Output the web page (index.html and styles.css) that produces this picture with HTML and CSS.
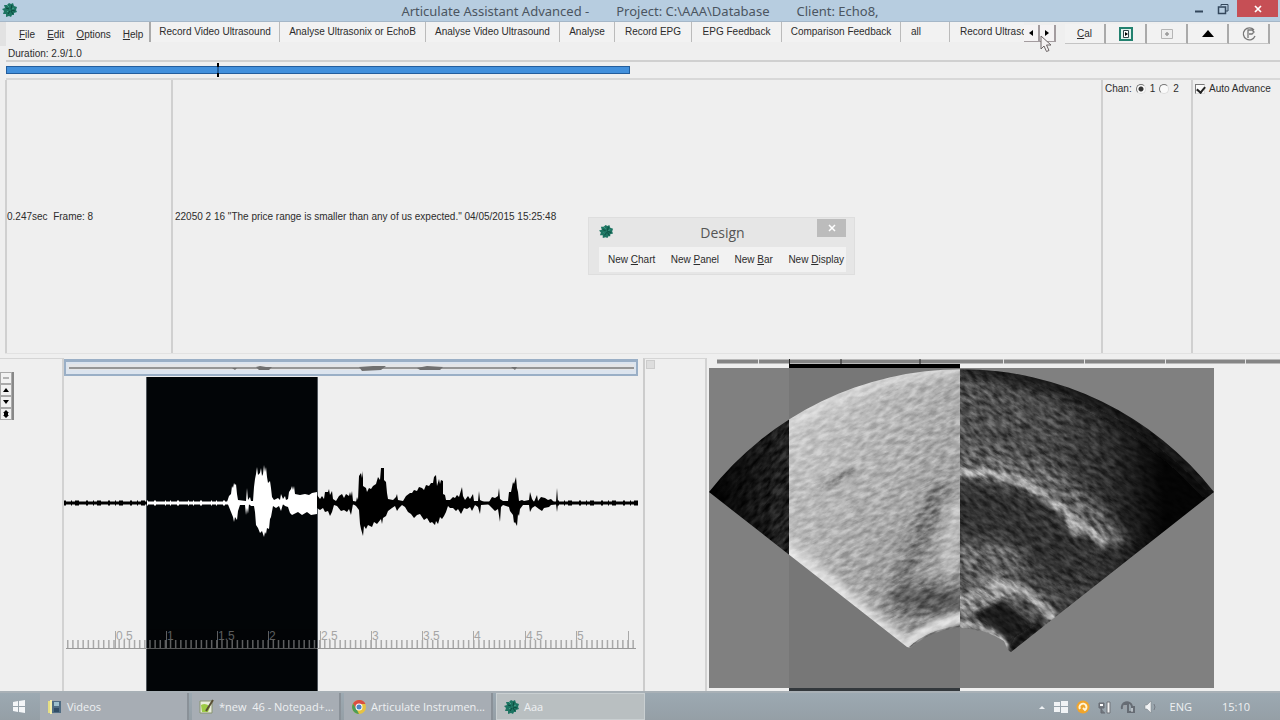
FILE: index.html
```html
<!DOCTYPE html>
<html lang="en">
<head>
<meta charset="utf-8">
<title>Articulate Assistant Advanced</title>
<link rel="stylesheet" href="styles.css">
</head>
<body>
<svg class="defs" aria-hidden="true">
  <symbol id="clover" viewBox="0 0 16 16">
    <path d="M7 1l2 1 2-1 1 3 3 1-1 3 1 2-3 1 0 2-2 0-1 2-2-1-3 1 0-3-3 0 1-3-2-2 3-1-1-3 3 0z" fill="#1d7462"/>
    <path d="M4 6l3 1M10 3L9 7M6 12l2-3M13 9L9 8M11 12L9 9" stroke="#0b4a3d" stroke-width="1" fill="none"/>
    <path d="M5 3l2 2M12 6l-2 1M5 9l1 1" stroke="#45a48c" stroke-width="1" fill="none"/>
  </symbol>
</svg>
<div class="app">
  <header class="titlebar">
    <svg class="app-icon"><use href="#clover"/></svg>
    <h1 class="title"><span>Articulate Assistant Advanced -</span><span>Project: C:\AAA\Database</span><span>Client: Echo8,</span></h1>
    <div class="window-buttons">
      <button class="win" aria-label="Minimize"><svg width="10" height="12"><path d="M1 8.500h8" stroke="#33475c" stroke-width="2"/></svg></button>
      <button class="win" aria-label="Restore"><svg width="12" height="12"><path d="M4 3V1.500h7V8H9" fill="none" stroke="#33475c"/><path d="M1.500 4h7v6.500h-7z" fill="none" stroke="#33475c" stroke-width="1.500"/></svg></button>
      <button class="win close" aria-label="Close"><svg width="8" height="8"><path d="M1 1l6 6M7 1L1 7" stroke="#fff" stroke-width="1.700"/></svg></button>
    </div>
  </header>

  <div class="toolbar">
    <nav class="menu">
      <button><u>F</u>ile</button><button><u>E</u>dit</button><button><u>O</u>ptions</button><button><u>H</u>elp</button>
    </nav>
    <div class="tabs" role="tablist">
      <button role="tab">Record Video Ultrasound</button>
      <button role="tab">Analyse Ultrasonix or EchoB</button>
      <button role="tab">Analyse Video Ultrasound</button>
      <button role="tab">Analyse</button>
      <button role="tab">Record EPG</button>
      <button role="tab">EPG Feedback</button>
      <button role="tab">Comparison Feedback</button>
      <button role="tab">all</button>
      <button role="tab">Record Ultrasound</button>
    </div>
    <div class="scroller">
      <button aria-label="Scroll tabs left"><svg width="6" height="8"><path d="M5 1v6L1 4z"/></svg></button>
      <button aria-label="Scroll tabs right"><svg width="6" height="8"><path d="M1 1v6l4-3z"/></svg></button>
      <svg class="pointer" width="12" height="18" viewBox="0 0 12 18"><path d="M1 1v13l3-3 2.500 5.500 2.500-1L6.500 10H11z" fill="#f5f2f3" stroke="#6c6466"/></svg>
    </div>
    <div class="tools">
      <button><u>C</u>al</button>
      <button aria-label="Play"><svg width="14" height="14"><path d="M1 1h12v12H1z" fill="#e4f3ef" stroke="#23816f" stroke-width="2"/><path d="M4.500 3.500h5v7h-5z" fill="#fff" stroke="#30444a"/><path d="M6 5v4l3-2z"/></svg></button>
      <button aria-label="Stop"><svg width="14" height="12"><path d="M1.500 1.500h11v9h-11z" fill="#eee" stroke="#b5b5b5"/><path d="M5 6h4M7 4v4" stroke="#999" stroke-width="1.500"/></svg></button>
      <button aria-label="Up"><svg width="14" height="8"><path d="M7 0l6 7H1z"/></svg></button>
      <button aria-label="Help"><svg width="16" height="16"><path d="M13 4a6 6 0 1 0 1 6M7 12V4h4l2 2-2 2H8" fill="none" stroke="#777" stroke-width="1.300"/></svg></button>
    </div>
  </div>

  <label class="duration" for="position">Duration: 2.9/1.0</label>
  <div class="track"><input id="position" type="range" min="0" max="625" value="212"></div>

  <section class="info">
    <div class="cell">0.247sec&nbsp; Frame: 8</div>
    <div class="cell">22050 2 16 "The price range is smaller than any of us expected." 04/05/2015 15:25:48</div>
    <div class="cell options"><span>Chan:</span>
      <label><input type="radio" name="chan" checked>1</label>
      <label><input type="radio" name="chan">2</label>
    </div>
    <div class="cell options"><label><input type="checkbox" checked>Auto Advance</label></div>
  </section>

  <main class="workspace">
    <div class="gutter">
      <div class="zoom">
        <button aria-label="Zoom out"><svg width="8" height="8"><path d="M1 4h6" stroke="#777"/></svg></button>
        <button aria-label="Up"><svg width="8" height="8"><path d="M4 2l3 4H1z"/></svg></button>
        <button aria-label="Down"><svg width="8" height="8"><path d="M4 6l3-4H1z"/></svg></button>
        <button aria-label="Fit"><svg width="8" height="8"><path d="M4 0l3 3H6v2h1L4 8 1 5h1V3H1z"/></svg></button>
      </div>
    </div>
    <div class="wave">
      <svg viewBox="64 358 574 333" role="img" aria-label="Waveform">
        <rect x="64" y="359" width="574" height="17" fill="#9aafc6"/>
        <rect x="66" y="362" width="570" height="12" fill="#dce4ee"/>
        <rect x="68" y="364" width="566" height="6" fill="#e4e5e7"/>
        <path d="M69 368h565" stroke="#969696" stroke-width="2"/>
        <path d="M232 368h5l-2 2zM256 367l4-1 6 1 6 0-3 3-10 0zM359 367l14-1 13 0-5 4-19 1zM417 368l10-2 16 1-3 3-20 0zM511 367h6l-2 3z" fill="#707070"/>
        <rect x="147" y="377" width="170" height="314" fill="#020507"/>
        <path d="M146.500 377v314M317.500 377v314" stroke="#50565c"/>
        <path d="M64 503h83M317 503h321" stroke="#000" stroke-width="3"/>
        <path d="M64 503h83M557 503h81" stroke="#000" stroke-width="5" stroke-dasharray="2 5 1 3 4 7"/>
        <path d="M147 503h170" stroke="#fff" stroke-width="3"/>
        <path d="M147 503h82" stroke="#fff" stroke-width="5" stroke-dasharray="1 6 2 9 1 4"/>
        <path fill="#fff" d="M227 502L229 496 231 494 232 486 233 488 234 483 235 485 236 484 237 494 238 500 246 501 247 488 248 500 250 497 251 501 253 501 254 487 255 479 256 474 257 467 258 475 260 473 261 468 262 476 263 474 264 465 265 472 266 467 267 477 268 483 270 481 271 488 272 497 274 500 278 498 280 500 281 494 283 499 285 496 286 500 288 499 289 492 291 489 292 486 293 490 294 486 295 494 300 495 305 494 309 495 312 493 317 492V514L311 515 307 512 302 515 298 512 294 514 292 515 290 513 288 507 285 506 283 504 281 511 279 506 276 508 273 506 271 517 270 519 269 529 267 528 266 534 265 532 264 537 262 531 260 533 258 528 256 525 255 512 254 506 251 506 249 504 248 514 247 508 246 515 245 505 240 505 238 511 237 520 235 517 234 522 233 517 231 512 229 507z"/>
        <path fill="#000" d="M317 495L320 499 322 496 324 499 325 492 328 492 329 489 330 495 332 491 333 499 336 501 339 496 342 494 344 498 346 494 349 496 350 492 351 496 352 491 353 501 356 502 357 497 358 500 359 476 361 473 362 478 363 471 363 486 366 488 367 492 369 488 371 489 373 486 376 484 378 477 380 480 381 468 384 468 384 480 386 482 387 493 388 499 393 500 396 497 397 494 398 500 403 501 406 496 410 493 412 493 414 490 417 491 419 487 422 488 424 490 426 485 429 486 431 483 433 483 434 477 436 475 437 486 439 479 440 484 441 480 443 481 443 494 445 495 446 500 450 500 453 497 455 498 457 495 459 497 462 487 463 496 465 500 468 496 470 499 473 494 474 501 478 501 479 491 480 500 484 502 489 502 492 497 495 498 498 496 499 488 500 499 503 501 508 501 509 492 511 492 513 482 514 484 516 477 517 488 518 492 519 501 522 500 524 501 529 500 530 492 532 499 534 502 537 495 538 501 541 497 545 498 548 500 551 499 554 502 556 502 557 488 558 502V504L557 512 556 504 551 505 549 507 544 508 542 511 539 509 535 506 532 508 530 512 529 505 523 505 520 509 519 516 518 514 517 526 515 522 514 523 513 515 510 511 509 507 503 505 501 507 500 522 498 509 495 511 492 508 488 504 481 505 480 514 478 507 475 505 472 511 470 507 467 509 464 508 461 514 458 509 456 511 453 508 450 508 448 506 446 512 444 516 442 519 440 517 438 524 436 521 435 525 432 522 430 523 427 518 424 520 420 514 417 515 414 518 411 514 408 512 405 507 402 505 399 508 397 511 395 506 392 508 388 511 386 516 383 518 382 524 381 519 377 524 374 522 372 527 368 525 366 529 364 526 363 536 361 529 360 524 359 510 356 506 353 504 351 515 349 509 347 512 344 510 341 511 337 506 334 505 332 512 330 516 328 511 325 512 323 508 320 510 317 508z"/>
        <g stroke="#a9a9a9" fill="none">
          <path d="M66 648.500h570" stroke="#999"/>
          <path d="M67 644h569" stroke-width="8" stroke-dasharray="1.500 3.640"/>
          <path d="M115.500 631v17M166.500 631v17M217.500 631v17M268.500 631v17M320.500 631v17M371.500 631v17M422.500 631v17M473.500 631v17M525.500 631v17M576.500 631v17M628.500 631v17"/>
        </g>
        <g class="scale">
          <text x="116" y="640">0.5</text><text x="167" y="640">1</text><text x="218" y="640">1.5</text><text x="269" y="640">2</text><text x="321" y="640">2.5</text><text x="372" y="640">3</text><text x="423" y="640">3.5</text><text x="474" y="640">4</text><text x="526" y="640">4.5</text><text x="577" y="640">5</text>
        </g>
        <rect x="147" y="629" width="170" height="21" fill="#020507" fill-opacity=".45"/>
      </svg>
    </div>
    <div class="gutter second"><span class="grip"></span></div>
    <div class="scan">
      <svg viewBox="707 358 573 333" role="img" aria-label="Ultrasound frame">
        <defs>
          <clipPath id="fan"><path d="M709 492A321 321 0 0 1 1214 492L1011 652Q1007 651 1004 641Q985 629 960 628Q930 630 911 648L907 647z"/></clipPath>
          <clipPath id="dark-left"><rect x="709" y="368" width="80" height="320"/></clipPath>
          <clipPath id="selected"><rect x="789" y="368" width="171" height="320"/></clipPath>
          <clipPath id="right"><rect x="960" y="368" width="254" height="320"/></clipPath>
          <linearGradient id="lg" x1="0" y1="0" x2=".7" y2="1"><stop offset="0" stop-color="#d4d4d4"/><stop offset=".35" stop-color="#b8b8b8"/><stop offset="1" stop-color="#8c8c8c"/></linearGradient>
          <linearGradient id="rg" x1="0" y1="0" x2="1" y2="0"><stop offset="0" stop-color="#525252"/><stop offset=".35" stop-color="#484848"/><stop offset=".6" stop-color="#2a2a2a"/><stop offset=".8" stop-color="#040404"/></linearGradient>
          <linearGradient id="dg" x1="0" y1="0" x2="1" y2="0"><stop offset="0" stop-color="#000"/><stop offset=".3" stop-color="#0b0b0b"/><stop offset="1" stop-color="#222"/></linearGradient>
          <filter id="soft" filterUnits="userSpaceOnUse" x="700" y="340" width="560" height="360"><feGaussianBlur stdDeviation="6"/></filter>
          <filter id="edge" filterUnits="userSpaceOnUse" x="700" y="340" width="560" height="360"><feGaussianBlur stdDeviation="2.500"/></filter>
          <filter id="speckle" x="0" y="0" width="1" height="1" color-interpolation-filters="sRGB"><feTurbulence type="fractalNoise" baseFrequency=".1 .24" numOctaves="3" seed="7"/><feColorMatrix values="2 0 0 0 -.5  2 0 0 0 -.5  2 0 0 0 -.5  0 0 0 0 1"/></filter>
        </defs>
        <path d="M717 361.500h563" stroke="#858585" stroke-width="4"/>
        <path d="M758.500 359v5M1003.500 359v5M1084.500 359v5M1165.500 359v5M1245.500 359v5" stroke="#e5e5e5"/>
        <path d="M789.500 359v5M841 359v5M920 359v5" stroke="#222"/>
        <rect x="789" y="364" width="171" height="4" fill="#000"/>
        <rect x="709" y="368" width="505" height="320" fill="#808080"/>
        <rect x="789" y="368" width="171" height="320" fill="#777"/>
        <rect x="789" y="688" width="171" height="3" fill="#33383c"/>
        <g clip-path="url(#fan)">
          <g clip-path="url(#dark-left)"><rect x="709" y="368" width="80" height="320" fill="url(#dg)"/>
            <rect class="noise" x="560" y="250" width="400" height="480" transform="rotate(-50 749 500)" filter="url(#speckle)"/></g>
          <g clip-path="url(#selected)">
            <rect x="789" y="368" width="171" height="320" fill="url(#lg)"/>
            <path d="M780 545l130 108" stroke="#e4e4e4" stroke-width="18" filter="url(#soft)"/>
            <path d="M785 425Q860 374 965 366" stroke="#dcdcdc" stroke-width="12" fill="none" filter="url(#soft)"/>
            <path d="M942 485Q915 540 892 608" stroke="#6c6c6c" stroke-width="14" fill="none" filter="url(#soft)"/>
            <path d="M958 500l-12 75" stroke="#c0c0c0" stroke-width="18" filter="url(#soft)"/>
            <ellipse cx="930" cy="600" rx="36" ry="15" fill="#585858" filter="url(#soft)"/>
            <path d="M820 488l36-18" stroke="#666" stroke-width="4" filter="url(#edge)"/>
            <path d="M903 648Q926 624 965 617" stroke="#e0e0e0" stroke-width="10" fill="none" filter="url(#edge)"/>
            <path d="M910 648Q930 630 962 627" stroke="#777" stroke-width="3" fill="none"/>
            <rect class="noise light" x="660" y="220" width="440" height="560" transform="rotate(-25 870 500)" filter="url(#speckle)"/>
          </g>
          <g clip-path="url(#right)">
            <rect x="960" y="368" width="254" height="320" fill="url(#rg)"/>
            <path d="M960 366Q1110 375 1216 492" stroke="#161616" stroke-width="20" fill="none" filter="url(#soft)"/>
            <path d="M965 458Q1060 462 1120 545" stroke="#666" stroke-width="18" fill="none" filter="url(#soft)"/>
            <path d="M945 488Q1020 468 1085 535L1100 550 1070 590 1000 550 945 550z" fill="#333" filter="url(#soft)"/>
            <path d="M958 472Q1010 470 1045 496T1106 543" stroke="#a8a8a8" stroke-width="9" fill="none" filter="url(#edge)"/>
            <path d="M1067 520l12 14" stroke="#c0c0c0" stroke-width="8" filter="url(#edge)"/>
            <ellipse cx="985" cy="560" rx="40" ry="20" fill="#646464" filter="url(#soft)"/>
            <path d="M950 606L1010 592" stroke="#8c8c8c" stroke-width="24" filter="url(#soft)"/>
            <path d="M988 586Q1032 584 1053 620" stroke="#bcbcbc" stroke-width="8" fill="none" filter="url(#edge)"/>
            <path d="M972 613L1004 600 1032 625 1008 644z" fill="#1c1c1c" filter="url(#edge)"/>
            <path d="M958 624Q990 623 1008 648" stroke="#aaa" stroke-width="6" fill="none" filter="url(#edge)"/>
            <path d="M1013 652l5-12 22-14" stroke="#080808" stroke-width="9" fill="none" filter="url(#edge)"/>
            <rect class="noise dim" x="820" y="220" width="540" height="560" transform="rotate(34 1087 500)" filter="url(#speckle)"/>
          </g>
        </g>
      </svg>
    </div>
  </main>

  <footer class="taskbar">
    <button class="start" aria-label="Start"><svg width="14" height="14"><path d="M1 2l5-1v5H1zM7 1l6-1v6H7zM1 7h5v5l-5-1zM7 7h6v6l-6-1z" fill="#f4f6f8"/></svg></button>
    <button class="task"><svg width="16" height="16"><path d="M1 2h5v12H1z" fill="#e6de83"/><path d="M5 2h9v12H5z" fill="#506d84"/><path d="M7 3h5v4H7z" fill="#9ec0cd"/><path d="M7 9h5v4H7z" fill="#314d66"/><path d="M4 1v14" stroke="#f5efae" stroke-width="2"/></svg>Videos</button>
    <button class="task"><svg width="16" height="16"><path d="M1 2h12v12H1z" fill="#e9eddc" stroke="#88946f"/><path d="M2 6q5-3 9 2l-2 5H3z" fill="#9dcb45"/><path d="M7 12l7-11" stroke="#594f35" stroke-width="2"/></svg>*new&nbsp; 46 - Notepad+...</button>
    <button class="task"><svg width="16" height="16"><circle cx="8" cy="8" r="7" fill="#e7c341"/><path d="M2 4.500A7 7 0 0 1 14.500 5H8L5 10z" fill="#d94f43"/><path d="M2 4.500L6 11l2 4A7 7 0 0 1 2 4.500z" fill="#4c9d57"/><circle cx="8" cy="8" r="3.500" fill="#fff"/><circle cx="8" cy="8" r="2.500" fill="#4e83c4"/></svg>Articulate Instrumen...</button>
    <button class="task active"><svg width="16" height="16"><use href="#clover"/></svg>Aaa</button>
    <div class="tray">
      <svg width="8" height="14"><path d="M4 6l3 3H1z" fill="#eef1f3"/></svg>
      <svg width="14" height="14"><path d="M0 2h6v4H0zM7 1h7v5H7zM0 7h6v5H0zM7 7h7v6H7z" fill="#f1f3f5"/></svg>
      <svg width="14" height="14"><circle cx="7" cy="7" r="6.500" fill="#f1a52c"/><path d="M4 9a3.500 3.500 0 1 1 5 1l-2-2" fill="none" stroke="#fff5d8" stroke-width="2"/></svg>
      <svg width="14" height="14"><path d="M1 3h5v5H1zM3 8v5h4" fill="#737980" stroke="#666b72"/><path d="M9 2h3v11H9z" fill="#f2f2f2" stroke="#70757b"/><path d="M2 5h3" stroke="#fff" stroke-width="2"/></svg>
      <svg width="16" height="14"><path d="M2 9a5 5 0 1 1 10-3M5 9V4h3v8h6V7h-3" fill="none" stroke="#666c74" stroke-width="2"/><path d="M5 5v4M12 8v4" stroke="#d7d9dd"/></svg>
      <svg width="14" height="14"><path d="M1 5h2l4-4v12L3 9H1z" fill="#f1f2f4" stroke="#7a8087" stroke-width=".5"/><path d="M10 4q2 3 0 6" fill="none" stroke="#767c85"/></svg>
      <span class="lang">ENG</span><time>15:10</time>
    </div>
  </footer>
</div>

<div class="dialog" role="dialog" aria-labelledby="design-title">
  <div class="dialog-head">
    <svg width="15" height="15"><use href="#clover"/></svg>
    <h2 id="design-title">Design</h2>
    <button class="dialog-close" aria-label="Close design"><svg width="8" height="8"><path d="M1 1l6 6M7 1L1 7" stroke="#fff" stroke-width="1.500"/></svg></button>
  </div>
  <div class="dialog-menu">
    <button>New <u>C</u>hart</button><button>New <u>P</u>anel</button><button>New <u>B</u>ar</button><button>New <u>D</u>isplay</button>
  </div>
</div>
</body>
</html>
```

FILE: styles.css
```css
* { box-sizing: border-box; }
body { margin: 0; background: #efefef; color: #2c2c2c; font: 10px/14px "Liberation Sans", Arial, sans-serif; }
button { margin: 0; padding: 0; border: 0; background: none; color: inherit; font: inherit; white-space: nowrap; }
h1, h2 { margin: 0; font-weight: 400; }
svg { display: block; flex: none; }
.defs { position: absolute; width: 0; height: 0; }
.app { display: flex; flex-direction: column; min-height: 100vh; }

.titlebar { display: grid; grid-template-columns: 100px 1fr 100px; height: 22px; background: #b7cde0; border-bottom: 1px solid #a5b7c8; }
.app-icon { width: 16px; height: 16px; margin: 2px; }
.title { display: flex; justify-content: center; gap: 27px; font: 13px/22px "Noto Sans", sans-serif; color: #4b5560; white-space: nowrap; }
.window-buttons { display: flex; justify-content: flex-end; padding-right: 2px; }
.win { display: flex; justify-content: center; align-items: center; width: 24px; height: 17px; }
.win.close { width: 41px; margin-left: 2px; background: #c64f55; }

.toolbar { display: grid; grid-template-columns: 149px 1fr 41px 215px; height: 24px; }
.menu { display: flex; gap: 12px; align-items: center; padding: 2px 0 0 13px; border-left: 6px solid #e2e2e2; }
.tabs { display: grid; grid-template-columns: 130fr 146fr 134fr 55fr 77fr 90fr 119fr 49fr 75fr; overflow: hidden; }
.tabs button { min-width: 0; height: 20px; border-left: 1px solid #bbb; background: #f2f2f2; overflow: hidden; }
.tabs button:first-child { border-left: 2px solid #aaa; }
.tabs button:nth-child(n+8) { padding-left: 10px; text-align: left; }
.scroller { position: relative; display: flex; align-items: flex-start; padding-top: 3px; }
.scroller button { display: flex; justify-content: center; align-items: center; width: 16px; height: 17px; background: #f5f3f4; border-right: 2px solid #a39c9f; border-bottom: 1px solid #a39c9f; }
.pointer { position: absolute; left: 16px; top: 13px; }
.tools { display: flex; justify-content: flex-end; padding: 2px 10px 0 0; }
.tools button { display: flex; justify-content: center; align-items: center; width: 41px; height: 20px; background: #f2f2f2; border-right: 2px solid #aaa; border-bottom: 1px solid #c4c4c4; }

.duration { height: 14px; padding: 1px 8px; }
.track { display: flex; align-items: center; height: 20px; margin-left: 6px; border-top: 2px solid #d0d0d0; border-bottom: 2px solid #d8d8d8; }
.track input { appearance: none; width: 49%; height: 14px; margin: 0; background: none; }
.track input::-webkit-slider-runnable-track { height: 8px; background: #4290dc; border: 1px solid #235d9c; }
.track input::-webkit-slider-thumb { appearance: none; width: 2px; height: 14px; margin-top: -4px; background: linear-gradient(#000 4px, #235d9c 4px, #235d9c 10px, #000 10px); }

.info { display: grid; grid-template-columns: 166px 1fr 90px 89px; flex: 0 0 274px; margin-left: 5px; border-bottom: 1px solid #e2e2e2; }
.cell { display: flex; align-items: center; padding-left: 2px; border-left: 2px solid #d0d0d0; white-space: nowrap; }
.cell:first-child { padding-left: 0; }
.cell.options { align-items: flex-start; gap: 4px; padding-top: 2px; }
.options label { display: flex; align-items: center; gap: 4px; }
.options input { appearance: none; width: 10px; height: 10px; margin: 0; background: #fafafa; border: 1px solid #777; border-right-color: #ddd; border-bottom-color: #ddd; }
.options input[type="radio"] { border-radius: 50%; }
.options input[type="radio"]:checked { background: radial-gradient(circle, #333 2px, #fafafa 3px); }
.options input[type="checkbox"]:checked::before { content: ""; display: block; width: 4px; height: 6px; margin: 0 2px; border: solid #222; border-width: 0 2px 2px 0; transform: rotate(40deg); }

.workspace { display: grid; grid-template-columns: 64px 579px 64px 1fr; flex: 1; padding-top: 4px; }
.gutter { padding-top: 13px; border-top: 1px solid #d5d5d5; border-right: 2px solid #d2d2d2; }
.zoom { width: 14px; border-right: 2px solid #888; }
.zoom button { display: flex; justify-content: center; align-items: center; width: 12px; height: 12px; background: #f2f2f2; border: 1px solid #aaa; }
.wave, .scan { min-width: 0; }
.wave svg { width: 574px; max-width: 100%; }
.scan svg { width: 100%; max-height: 333px; }
.gutter.second { padding: 1px; border-left: 2px solid #ccc; }
.grip { display: block; width: 9px; height: 9px; background: #ddd; border: 1px solid #ccc; }
.scale { font: 12px "Liberation Sans", sans-serif; fill: #a5a5a5; }
.noise { mix-blend-mode: overlay; opacity: .8; }
.noise.light { opacity: .32; }
.noise.dim { opacity: .5; }

.taskbar { display: flex; gap: 3px; height: 29px; background: linear-gradient(#9ca9b2, #959fa6); border-top: 2px solid #a8b0b6; color: #eef0f2; font: 11px/16px "Open Sans", sans-serif; }
.start { display: flex; align-items: center; justify-content: center; width: 37px; }
.task { display: flex; align-items: center; gap: 4px; flex: 0 1 149px; padding: 0 7px; background: #a7adb4; border-right: 2px solid #8a9198; overflow: hidden; }
.task.active { background: #b9bfc1; border: 1px solid #c9cfd1; }
.tray { display: flex; align-items: center; gap: 8px; margin-left: auto; padding-right: 30px; }
.lang { margin-left: 4px; }
.tray time { margin-left: 22px; }

.dialog { position: absolute; left: 588px; top: 217px; width: 267px; padding: 1px 8px 2px 10px; background: #e6e6e6; border: 1px solid #dedede; }
.dialog-head { display: grid; grid-template-columns: 29px 1fr 29px; height: 28px; }
.dialog-head > svg { margin-top: 5px; }
.dialog-head h2 { text-align: center; font: 14px/27px "Open Sans", sans-serif; color: #555; }
.dialog-close { display: flex; align-items: center; justify-content: center; height: 18px; background: #bcbcbc; }
.dialog-menu { display: flex; justify-content: space-between; align-items: center; height: 25px; padding: 0 2px 0 9px; background: #f2f2f2; }
```
